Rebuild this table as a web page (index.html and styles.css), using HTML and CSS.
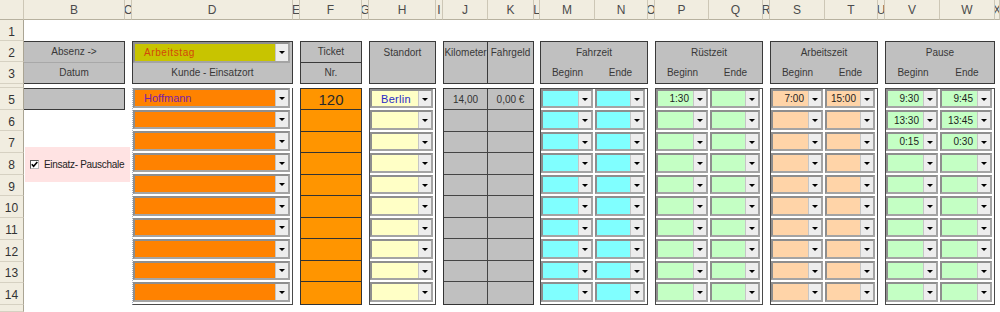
FILE: index.html
```html
<!DOCTYPE html>
<html lang="de">
<head>
<meta charset="utf-8">
<title>Einsatzplan</title>
<link rel="stylesheet" href="styles.css">
</head>
<body>
<div class="sheet">
  <div class="ch"></div>
  <div class="ch">B</div>
  <div class="ch">C</div>
  <div class="ch">D</div>
  <div class="ch">E</div>
  <div class="ch">F</div>
  <div class="ch">G</div>
  <div class="ch">H</div>
  <div class="ch">I</div>
  <div class="ch">J</div>
  <div class="ch">K</div>
  <div class="ch">L</div>
  <div class="ch">M</div>
  <div class="ch">N</div>
  <div class="ch">O</div>
  <div class="ch">P</div>
  <div class="ch">Q</div>
  <div class="ch">R</div>
  <div class="ch">S</div>
  <div class="ch">T</div>
  <div class="ch">U</div>
  <div class="ch">V</div>
  <div class="ch">W</div>
  <div class="ch">X</div>

  <div class="rh">1</div>
  <div class="rh">2</div>
  <div class="rh">3</div>
  <div class="rh"></div>
  <div class="rh">5</div>
  <div class="rh">6</div>
  <div class="rh">7</div>
  <div class="rh">8</div>
  <div class="rh">9</div>
  <div class="rh">10</div>
  <div class="rh">11</div>
  <div class="rh">12</div>
  <div class="rh">13</div>
  <div class="rh">14</div>
  <div class="rh"></div>

  <!-- header blocks -->
  <div class="head c-b r-head">
    <span class="soft-div">Absenz -&gt;</span>
    <span>Datum</span>
  </div>

  <div class="head c-d r-head">
    <div class="combo olive"><span class="val arbeit">Arbeitstag</span><span class="btn"></span></div>
    <span>Kunde - Einsatzort</span>
  </div>

  <div class="head c-f r-head">
    <span class="hard-div">Ticket</span>
    <span>Nr.</span>
  </div>

  <div class="head single c-h r-head">
    <span class="top">Standort</span>
  </div>

  <div class="head cols c-jk r-head">
    <span class="top sep">Kilometer</span>
    <span class="top">Fahrgeld</span>
  </div>

  <div class="head two c-mn r-head">
    <span class="span2">Fahrzeit</span>
    <span>Beginn</span>
    <span>Ende</span>
  </div>

  <div class="head two c-pq r-head">
    <span class="span2">Rüstzeit</span>
    <span>Beginn</span>
    <span>Ende</span>
  </div>

  <div class="head two c-st r-head">
    <span class="span2">Arbeitszeit</span>
    <span>Beginn</span>
    <span>Ende</span>
  </div>

  <div class="head two c-vw r-head">
    <span class="span2">Pause</span>
    <span>Beginn</span>
    <span>Ende</span>
  </div>

  <!-- column B -->
  <div class="datebox c-b r-first"></div>
  <div class="check c-bc r-check">
    <span class="box"><svg width="7" height="7" viewBox="0 0 7 7"><polyline points="0.8,3.2 2.6,5.2 6.3,1" fill="none" stroke="#000" stroke-width="1.6"/></svg></span>
    <span>Einsatz- Pauschale</span>
  </div>

  <!-- column D -->
  <div class="list dlist c-d r-body">
    <div class="combo orange"><span class="val hoff">Hoffmann</span><span class="btn"></span></div>
    <div class="combo orange"><span class="val"></span><span class="btn"></span></div>
    <div class="combo orange"><span class="val"></span><span class="btn"></span></div>
    <div class="combo orange"><span class="val"></span><span class="btn"></span></div>
    <div class="combo orange"><span class="val"></span><span class="btn"></span></div>
    <div class="combo orange"><span class="val"></span><span class="btn"></span></div>
    <div class="combo orange"><span class="val"></span><span class="btn"></span></div>
    <div class="combo orange"><span class="val"></span><span class="btn"></span></div>
    <div class="combo orange"><span class="val"></span><span class="btn"></span></div>
    <div class="combo orange"><span class="val"></span><span class="btn"></span></div>
  </div>

  <!-- column F -->
  <div class="tickets c-f r-body">
    <div>120</div>
    <div></div>
    <div></div>
    <div></div>
    <div></div>
    <div></div>
    <div></div>
    <div></div>
    <div></div>
    <div></div>
  </div>

  <!-- column H -->
  <div class="list c-h r-body">
    <div class="combo yellow"><span class="val berlin">Berlin</span><span class="btn"></span></div>
    <div class="combo yellow"><span class="val"></span><span class="btn"></span></div>
    <div class="combo yellow"><span class="val"></span><span class="btn"></span></div>
    <div class="combo yellow"><span class="val"></span><span class="btn"></span></div>
    <div class="combo yellow"><span class="val"></span><span class="btn"></span></div>
    <div class="combo yellow"><span class="val"></span><span class="btn"></span></div>
    <div class="combo yellow"><span class="val"></span><span class="btn"></span></div>
    <div class="combo yellow"><span class="val"></span><span class="btn"></span></div>
    <div class="combo yellow"><span class="val"></span><span class="btn"></span></div>
    <div class="combo yellow"><span class="val"></span><span class="btn"></span></div>
  </div>

  <!-- columns J/K -->
  <div class="calc c-jk r-body">
    <div>14,00</div><div>0,00 €</div>
    <div></div><div></div>
    <div></div><div></div>
    <div></div><div></div>
    <div></div><div></div>
    <div></div><div></div>
    <div></div><div></div>
    <div></div><div></div>
    <div></div><div></div>
    <div></div><div></div>
  </div>

  <!-- columns M/N : Fahrzeit -->
  <div class="list pair c-mn r-body">
    <div class="combo cyan"><span class="val"></span><span class="btn"></span></div>
    <div class="combo cyan"><span class="val"></span><span class="btn"></span></div>
    <div class="combo cyan"><span class="val"></span><span class="btn"></span></div>
    <div class="combo cyan"><span class="val"></span><span class="btn"></span></div>
    <div class="combo cyan"><span class="val"></span><span class="btn"></span></div>
    <div class="combo cyan"><span class="val"></span><span class="btn"></span></div>
    <div class="combo cyan"><span class="val"></span><span class="btn"></span></div>
    <div class="combo cyan"><span class="val"></span><span class="btn"></span></div>
    <div class="combo cyan"><span class="val"></span><span class="btn"></span></div>
    <div class="combo cyan"><span class="val"></span><span class="btn"></span></div>
    <div class="combo cyan"><span class="val"></span><span class="btn"></span></div>
    <div class="combo cyan"><span class="val"></span><span class="btn"></span></div>
    <div class="combo cyan"><span class="val"></span><span class="btn"></span></div>
    <div class="combo cyan"><span class="val"></span><span class="btn"></span></div>
    <div class="combo cyan"><span class="val"></span><span class="btn"></span></div>
    <div class="combo cyan"><span class="val"></span><span class="btn"></span></div>
    <div class="combo cyan"><span class="val"></span><span class="btn"></span></div>
    <div class="combo cyan"><span class="val"></span><span class="btn"></span></div>
    <div class="combo cyan"><span class="val"></span><span class="btn"></span></div>
    <div class="combo cyan"><span class="val"></span><span class="btn"></span></div>
  </div>

  <!-- columns P/Q : Rüstzeit -->
  <div class="list pair c-pq r-body">
    <div class="combo green"><span class="val r">1:30</span><span class="btn"></span></div>
    <div class="combo green"><span class="val r"></span><span class="btn"></span></div>
    <div class="combo green"><span class="val r"></span><span class="btn"></span></div>
    <div class="combo green"><span class="val r"></span><span class="btn"></span></div>
    <div class="combo green"><span class="val r"></span><span class="btn"></span></div>
    <div class="combo green"><span class="val r"></span><span class="btn"></span></div>
    <div class="combo green"><span class="val r"></span><span class="btn"></span></div>
    <div class="combo green"><span class="val r"></span><span class="btn"></span></div>
    <div class="combo green"><span class="val r"></span><span class="btn"></span></div>
    <div class="combo green"><span class="val r"></span><span class="btn"></span></div>
    <div class="combo green"><span class="val r"></span><span class="btn"></span></div>
    <div class="combo green"><span class="val r"></span><span class="btn"></span></div>
    <div class="combo green"><span class="val r"></span><span class="btn"></span></div>
    <div class="combo green"><span class="val r"></span><span class="btn"></span></div>
    <div class="combo green"><span class="val r"></span><span class="btn"></span></div>
    <div class="combo green"><span class="val r"></span><span class="btn"></span></div>
    <div class="combo green"><span class="val r"></span><span class="btn"></span></div>
    <div class="combo green"><span class="val r"></span><span class="btn"></span></div>
    <div class="combo green"><span class="val r"></span><span class="btn"></span></div>
    <div class="combo green"><span class="val r"></span><span class="btn"></span></div>
  </div>

  <!-- columns S/T : Arbeitszeit -->
  <div class="list pair c-st r-body">
    <div class="combo peach"><span class="val r">7:00</span><span class="btn"></span></div>
    <div class="combo peach"><span class="val r">15:00</span><span class="btn"></span></div>
    <div class="combo peach"><span class="val r"></span><span class="btn"></span></div>
    <div class="combo peach"><span class="val r"></span><span class="btn"></span></div>
    <div class="combo peach"><span class="val r"></span><span class="btn"></span></div>
    <div class="combo peach"><span class="val r"></span><span class="btn"></span></div>
    <div class="combo peach"><span class="val r"></span><span class="btn"></span></div>
    <div class="combo peach"><span class="val r"></span><span class="btn"></span></div>
    <div class="combo peach"><span class="val r"></span><span class="btn"></span></div>
    <div class="combo peach"><span class="val r"></span><span class="btn"></span></div>
    <div class="combo peach"><span class="val r"></span><span class="btn"></span></div>
    <div class="combo peach"><span class="val r"></span><span class="btn"></span></div>
    <div class="combo peach"><span class="val r"></span><span class="btn"></span></div>
    <div class="combo peach"><span class="val r"></span><span class="btn"></span></div>
    <div class="combo peach"><span class="val r"></span><span class="btn"></span></div>
    <div class="combo peach"><span class="val r"></span><span class="btn"></span></div>
    <div class="combo peach"><span class="val r"></span><span class="btn"></span></div>
    <div class="combo peach"><span class="val r"></span><span class="btn"></span></div>
    <div class="combo peach"><span class="val r"></span><span class="btn"></span></div>
    <div class="combo peach"><span class="val r"></span><span class="btn"></span></div>
  </div>

  <!-- columns V/W : Pause -->
  <div class="list pair c-vw r-body">
    <div class="combo green"><span class="val r">9:30</span><span class="btn"></span></div>
    <div class="combo green"><span class="val r">9:45</span><span class="btn"></span></div>
    <div class="combo green"><span class="val r">13:30</span><span class="btn"></span></div>
    <div class="combo green"><span class="val r">13:45</span><span class="btn"></span></div>
    <div class="combo green"><span class="val r">0:15</span><span class="btn"></span></div>
    <div class="combo green"><span class="val r">0:30</span><span class="btn"></span></div>
    <div class="combo green"><span class="val r"></span><span class="btn"></span></div>
    <div class="combo green"><span class="val r"></span><span class="btn"></span></div>
    <div class="combo green"><span class="val r"></span><span class="btn"></span></div>
    <div class="combo green"><span class="val r"></span><span class="btn"></span></div>
    <div class="combo green"><span class="val r"></span><span class="btn"></span></div>
    <div class="combo green"><span class="val r"></span><span class="btn"></span></div>
    <div class="combo green"><span class="val r"></span><span class="btn"></span></div>
    <div class="combo green"><span class="val r"></span><span class="btn"></span></div>
    <div class="combo green"><span class="val r"></span><span class="btn"></span></div>
    <div class="combo green"><span class="val r"></span><span class="btn"></span></div>
    <div class="combo green"><span class="val r"></span><span class="btn"></span></div>
    <div class="combo green"><span class="val r"></span><span class="btn"></span></div>
    <div class="combo green"><span class="val r"></span><span class="btn"></span></div>
    <div class="combo green"><span class="val r"></span><span class="btn"></span></div>
  </div>
</div>
</body>
</html>
```

FILE: styles.css
```css
:root {
  --line: #3a3a3a;
  --grey: #c0c0c0;
  --hdr: #f1ede0;
}

* { box-sizing: border-box; }

html, body {
  margin: 0;
  padding: 0;
  background: #fff;
}

body {
  width: 1000px;
  height: 312px;
  overflow: hidden;
  font-family: "Liberation Sans", Arial, sans-serif;
  font-size: 10px;
  color: #333;
}

.sheet {
  display: grid;
  grid-template-columns: 24px 101px 7px 161px 7px 62px 7px 67px 7px 45px 46px 6px 55px 53px 7px 54px 54px 7px 55px 53px 7px 55px 55px 1fr;
  grid-template-rows: 20px 21px 21px 22px 4px repeat(10, 21.7px) 1fr;
  height: 312px;
}

/* column headers */
.ch {
  grid-row: 1;
  background: var(--hdr);
  border-right: 1px solid #cdc7b6;
  border-bottom: 1px solid #b7b19f;
  display: flex;
  align-items: center;
  justify-content: center;
  overflow: hidden;
  font-size: 12px;
  color: #4b4b4b;
}

/* row headers */
.rh {
  grid-column: 1;
  background: var(--hdr);
  border-right: 1px solid #aaa493;
  border-bottom: 1px solid #d6d1c2;
  display: flex;
  align-items: center;
  justify-content: center;
  padding-top: 3px;
  overflow: hidden;
  font-size: 12px;
  color: #333;
}

/* placement */
.c-b { grid-column: 2; }
.c-bc { grid-column: 2 / 4; }
.c-d { grid-column: 4; }
.c-f { grid-column: 6; }
.c-h { grid-column: 8; }
.c-jk { grid-column: 10 / 12; }
.c-mn { grid-column: 13 / 15; }
.c-pq { grid-column: 16 / 18; }
.c-st { grid-column: 19 / 21; }
.c-vw { grid-column: 22 / 24; }
.r-head { grid-row: 3 / 5; }
.r-first { grid-row: 6; }
.r-body { grid-row: 6 / 16; }
.r-check { grid-row: 8 / 11; }

/* header blocks */
.head {
  background: var(--grey);
  border: 1px solid var(--line);
  display: grid;
  grid-template-rows: 1fr 1fr;
  color: #383838;
}
.head > span {
  display: flex;
  align-items: center;
  justify-content: center;
  white-space: nowrap;
}
.head.c-b { border-left: 0; }
.head .soft-div { border-bottom: 1px solid #a8a8a8; }
.head .hard-div { border-bottom: 1px solid var(--line); }
.head.two { grid-template-columns: 1fr 1fr; }
.head .span2 { grid-column: 1 / 3; }
.head.single { grid-template-rows: 1fr; }
.head.cols {
  grid-template-rows: 1fr;
  grid-template-columns: 44px 1fr;
}
.head .top {
  align-items: flex-start;
  padding-top: 5px;
}
.head .sep { border-right: 1px solid var(--line); }
.head .combo { margin: 0 2px 0 0; }

/* combo boxes */
.combo {
  display: flex;
  min-width: 0;
  margin: 0 2px 2px 0;
  border: 2px solid #a4a4a4;
  border-top-color: #8e8e8e;
  border-left-color: #8e8e8e;
}
.combo .val {
  flex: 1;
  display: flex;
  align-items: center;
  padding: 0 4px;
  overflow: hidden;
  white-space: nowrap;
  font-size: 10px;
  color: #1e1e1e;
}
.combo .val.r { justify-content: flex-end; }
.combo .btn {
  width: 13px;
  flex: none;
  background: #ededed;
  border-left: 1px solid #c6c6c6;
  display: flex;
  align-items: center;
  justify-content: center;
}
.combo .btn::before {
  content: "";
  border-left: 3px solid transparent;
  border-right: 3px solid transparent;
  border-top: 3px solid #000;
  margin-top: 1px;
}

.olive { background: #c8c400; }
.orange { background: #ff8200; }
.yellow { background: #ffffc6; }
.cyan { background: #80ffff; }
.green { background: #c4ffc4; }
.peach { background: #ffd4a8; }

.val.arbeit {
  padding-left: 9px;
  color: #d2480a;
  letter-spacing: 0.6px;
}
.val.hoff {
  padding-left: 9px;
  font-size: 11px;
  color: #7a1fa8;
}
.val.berlin {
  padding-left: 9px;
  font-size: 11px;
  letter-spacing: 0.3px;
  color: #2a2ac6;
}

/* body lists */
.list {
  display: grid;
  grid-template-rows: repeat(10, 1fr);
  border: 1px solid #4a4a4a;
}
.list.dlist {
  border-top: 0;
  border-left: 1px dotted #a9b4c8;
}
.list.pair { grid-template-columns: 54px 1fr; }

/* ticket column */
.tickets {
  display: grid;
  grid-template-rows: repeat(10, 1fr);
  border: 1px solid #333;
  background: #ff9500;
}
.tickets > div {
  border-bottom: 1px solid #333;
  display: flex;
  align-items: center;
  justify-content: center;
  font-size: 15px;
  color: #2a2a2a;
}
.tickets > div:last-child { border-bottom: 0; }

/* km / money */
.calc {
  display: grid;
  grid-template-columns: 44px 1fr;
  grid-template-rows: repeat(10, 1fr);
  border: 1px solid #333;
  background: var(--grey);
}
.calc > div {
  border-right: 1px solid #444;
  border-bottom: 1px solid #444;
  display: flex;
  align-items: center;
  justify-content: center;
  font-size: 10px;
  color: #333;
}
.calc > div:nth-child(2n) { border-right: 0; }
.calc > div:nth-last-child(-n+2) { border-bottom: 0; }

/* column B extras */
.datebox {
  background: var(--grey);
  border: 1px solid var(--line);
  border-left: 0;
}
.check {
  align-self: start;
  margin: 16px 0 0 1px;
  width: 105px;
  height: 35px;
  background: #ffe3e3;
  display: flex;
  align-items: center;
  gap: 5px;
  padding-left: 5px;
  font-size: 10px;
  letter-spacing: -0.3px;
  color: #222;
  white-space: nowrap;
}
.check .box {
  width: 9px;
  height: 9px;
  flex: none;
  background: #fff;
  border: 1px solid #555;
  border-right-color: #bbb;
  border-bottom-color: #bbb;
  display: flex;
  align-items: center;
  justify-content: center;
}
```
